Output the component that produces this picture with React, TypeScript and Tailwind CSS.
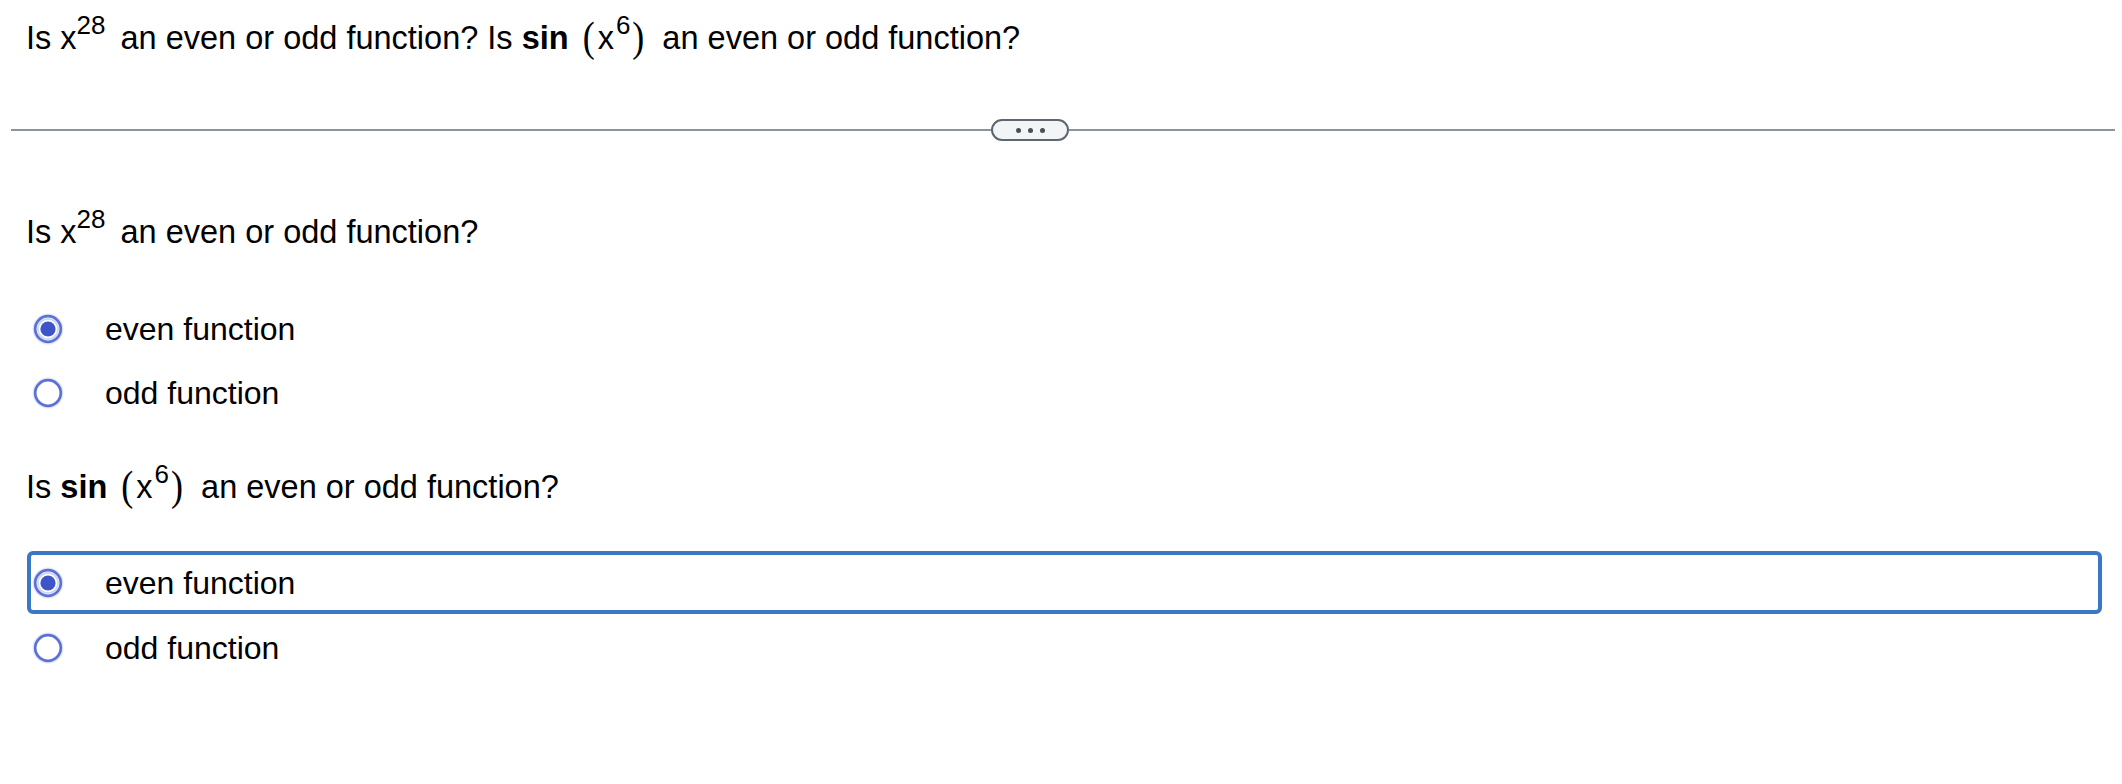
import React from "react";

function Radio({ checked }: { checked?: boolean }) {
  return (
    <svg width="32" height="32" viewBox="0 0 32 32" className="shrink-0 block">
      <circle cx="16" cy="16" r="14.6" fill="none" stroke="#e4e8f8" strokeWidth="1.8" />
      <circle cx="16" cy="16" r="12.8" fill="#ffffff" stroke="#5c71d5" strokeWidth="2.7" />
      {checked && (
        <>
          <circle cx="16" cy="16" r="10.1" fill="none" stroke="#cdd5f3" strokeWidth="1.6" />
          <circle cx="16" cy="16" r="7.6" fill="#3d55c9" />
        </>
      )}
    </svg>
  );
}

function Sup28() {
  return <span className="text-[26px] leading-[0] align-[15px] pr-[6px]">28</span>;
}

function SinX6() {
  return (
    <>
      <span className="font-bold">sin</span>{" "}
      <span className="inline-block leading-[0] ml-[5px] font-['Liberation_Serif',serif] text-[36px] scale-y-[1.15]">(</span>
      <span className="pl-[3px]">x</span>
      <span className="text-[26px] leading-[0] align-[15px] pl-[2px]">6</span>
      <span className="inline-block leading-[0] pl-[2px] pr-[9px] font-['Liberation_Serif',serif] text-[36px] scale-y-[1.15]">)</span>
    </>
  );
}

function Option({ label, checked, focused }: { label: string; checked?: boolean; focused?: boolean }) {
  if (focused) {
    return (
      <div className="ml-[27px] mr-[20px] h-[63px] border-4 border-[#3a78c5] rounded-[6px] flex items-center pl-[1px]">
        <Radio checked={checked} />
        <span className="ml-[41px] text-[32px] leading-none whitespace-nowrap">{label}</span>
      </div>
    );
  }
  return (
    <div className="h-[64px] flex items-center pl-[32px]">
      <Radio checked={checked} />
      <span className="ml-[41px] text-[32px] leading-none whitespace-nowrap">{label}</span>
    </div>
  );
}

export default function App() {
  return (
    <div className="w-[2122px] h-[784px] bg-white text-black font-['Liberation_Sans',Arial,sans-serif] overflow-hidden">
      <div className="h-[76px] pl-[26px] text-[32.5px] leading-[76px] whitespace-nowrap">
        Is x<Sup28 /> an even or odd function? Is <SinX6 /> an even or odd function?
      </div>

      <div className="mt-[43px] h-[22px] flex items-center pl-[11px] pr-[7px]">
        <div className="w-[980px] h-[2px] bg-[#8a93a0]" />
        <div className="w-[78px] h-[22px] shrink-0 rounded-full border-2 border-[#5d6673] bg-[#f3f4f6] flex items-center justify-center gap-[7px]">
          <span className="w-[5px] h-[5px] rounded-full bg-[#4a4f57]" />
          <span className="w-[5px] h-[5px] rounded-full bg-[#4a4f57]" />
          <span className="w-[5px] h-[5px] rounded-full bg-[#4a4f57]" />
        </div>
        <div className="flex-1 h-[2px] bg-[#8a93a0]" />
      </div>

      <div className="mt-[67px] h-[48px] leading-[48px] pl-[26px] text-[32.5px] whitespace-nowrap">
        Is x<Sup28 /> an even or odd function?
      </div>

      <div className="mt-[41px]">
        <Option label="even function" checked />
        <Option label="odd function" />
      </div>

      <div className="mt-[38px] h-[48px] leading-[48px] pl-[26px] text-[32.5px] whitespace-nowrap">
        Is <SinX6 /> an even or odd function?
      </div>

      <div className="mt-[40px]">
        <Option label="even function" checked focused />
        <div className="mt-[2px]">
          <Option label="odd function" />
        </div>
      </div>
    </div>
  );
}
